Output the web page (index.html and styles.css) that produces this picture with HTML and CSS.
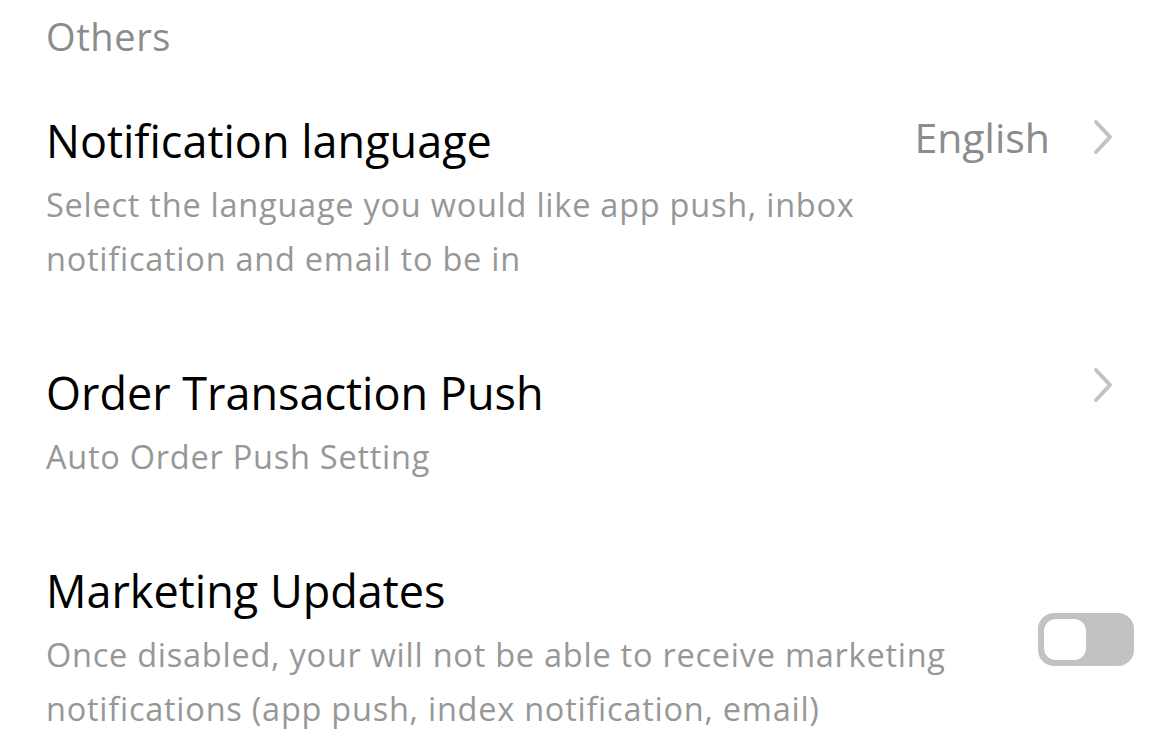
FILE: index.html
```html
<!DOCTYPE html>
<html lang="en">
<head>
<meta charset="UTF-8">
<meta name="viewport" content="width=device-width, initial-scale=1.0">
<title>Others</title>
<link rel="stylesheet" href="styles.css">
</head>
<body>

  <div class="section">
    <div class="section-title">Others</div>

    <div class="row row-language">
      <div class="row-text">
        <div class="row-head">Notification language</div>
        <div class="row-desc">Select the language you would like app push, inbox notification and email to be in</div>
      </div>
      <div class="row-side">
        <span class="row-value">English</span>
        <svg class="chevron" width="22" height="36" viewBox="0 0 22 36">
          <path d="M4 3 L18 18 L4 33" fill="none" stroke="#c2c2c2" stroke-width="4" stroke-linecap="round" stroke-linejoin="round"/>
        </svg>
      </div>
    </div>

    <div class="row row-order">
      <div class="row-text">
        <div class="row-head">Order Transaction Push</div>
        <div class="row-desc">Auto Order Push Setting</div>
      </div>
      <div class="row-side">
        <svg class="chevron" width="22" height="36" viewBox="0 0 22 36">
          <path d="M4 3 L18 18 L4 33" fill="none" stroke="#c2c2c2" stroke-width="4" stroke-linecap="round" stroke-linejoin="round"/>
        </svg>
      </div>
    </div>

    <div class="row row-marketing">
      <div class="row-text">
        <div class="row-head">Marketing Updates</div>
        <div class="row-desc">Once disabled, your will not be able to receive marketing notifications (app push, index notification, email)</div>
      </div>
      <div class="toggle">
        <div class="toggle-knob"></div>
      </div>
    </div>
  </div>

</body>
</html>
```

FILE: styles.css
```css
* {
  box-sizing: border-box;
  margin: 0;
  padding: 0;
}

body {
  font-family: "Open Sans", "Noto Sans", sans-serif;
  font-variant-ligatures: none;
  background-color: #fff;
  color: #000;
  overflow: hidden;
}

.section {
  padding: 14px 29px 0 46px;
}

.section-title {
  font-size: 38px;
  line-height: 44px;
  letter-spacing: 0.6px;
  color: #8c8c8c;
}

/* Rows */

.row {
  display: flex;
  align-items: flex-start;
  justify-content: space-between;
}

.row-language {
  margin-top: 55px;
}

.row-order,
.row-marketing {
  margin-top: 79px;
}

.row-text {
  flex: 1;
}

.row-head {
  font-size: 45px;
  line-height: 56px;
  color: #000;
}

.row-desc {
  font-size: 32.5px;
  line-height: 54px;
  letter-spacing: 0.75px;
  color: #979797;
  max-width: 910px;
  margin-top: 9px;
}

.row-side {
  display: flex;
  align-items: center;
  gap: 42px;
  padding-top: 2px;
}

.row-value {
  font-size: 41px;
  line-height: 44px;
  color: #8c8c8c;
}

.chevron {
  display: block;
  margin-right: 20px;
}

/* Toggle */

.toggle {
  width: 96px;
  height: 53px;
  border-radius: 16px;
  background-color: #c2c2c2;
  padding: 6px;
  margin-top: 50px;
}

.toggle-knob {
  width: 42px;
  height: 41px;
  border-radius: 12px;
  background-color: #fff;
}
```
